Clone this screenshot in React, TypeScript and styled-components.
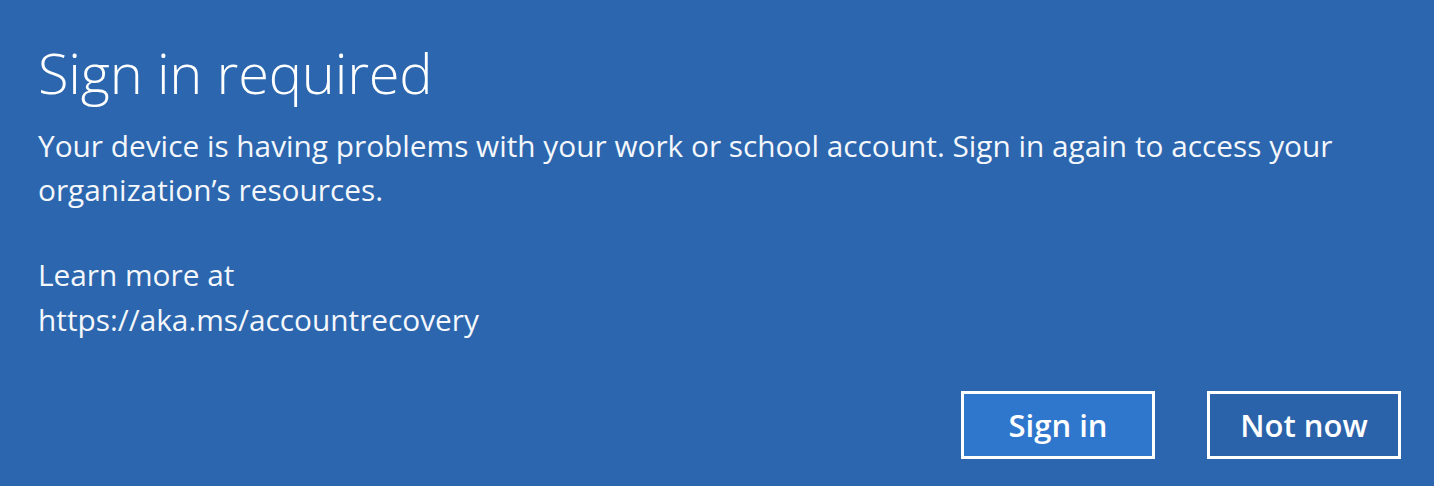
import styled, { createGlobalStyle } from "styled-components"

const GlobalStyle = createGlobalStyle`
  html, body {
    margin: 0;
    padding: 0;
    background: #2b66ae;
  }
  body {
    font-family: "Open Sans", "Noto Sans", "Liberation Sans", sans-serif;
    color: #ffffff;
  }
`

const Dialog = styled.div`
  box-sizing: border-box;
  width: 1434px;
  height: 486px;
  background: #2b66ae;
  padding: 34px 33px 27px 38px;
  display: flex;
  flex-direction: column;
`

const Title = styled.h1`
  margin: 0;
  font-size: 56px;
  font-weight: 300;
  line-height: 76px;
  letter-spacing: -0.2px;
`

const Message = styled.p`
  margin: 14px 0 0;
  font-size: 29.8px;
  font-weight: 400;
  line-height: 44px;
  max-width: 1340px;
  color: #f4f7fb;
`

const LearnMore = styled.p`
  margin: 40px 0 0;
  font-size: 29.8px;
  line-height: 45px;
  color: #f4f7fb;
`

const Actions = styled.div`
  margin-top: auto;
  display: flex;
  justify-content: flex-end;
  gap: 52px;
`

const Button = styled.button<{ $primary?: boolean }>`
  box-sizing: border-box;
  width: 194px;
  height: 68px;
  border: 3px solid #ffffff;
  background: ${p => (p.$primary ? "#2f77cc" : "#2a63a9")};
  color: #ffffff;
  font-family: inherit;
  font-size: 31px;
  font-weight: 600;
  cursor: pointer;
`

export default function App() {
  return (
    <>
      <GlobalStyle />
      <Dialog>
        <Title>Sign in required</Title>
        <Message>
          Your device is having problems with your work or school account. Sign in again to access your organization’s resources.
        </Message>
        <LearnMore>
          Learn more at
          <br />
          https://aka.ms/accountrecovery
        </LearnMore>
        <Actions>
          <Button $primary>Sign in</Button>
          <Button>Not now</Button>
        </Actions>
      </Dialog>
    </>
  )
}
